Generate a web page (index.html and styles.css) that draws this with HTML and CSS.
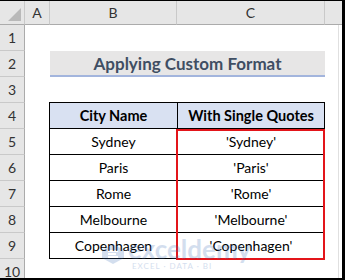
FILE: index.html
```html
<!DOCTYPE html>
<html>
<head>
<meta charset="utf-8">
<link rel="stylesheet" href="styles.css">
</head>
<body>
<div class="frame">
  <div class="sheet">
    <div class="corner"><span class="tri"></span></div>
    <div class="colhead">A</div>
    <div class="colhead">B</div>
    <div class="colhead">C</div>
    <div class="colhead last"></div>

    <div class="rowhead r1">1</div>
    <div class="rowhead r2">2</div>
    <div class="rowhead r3">3</div>
    <div class="rowhead r4">4</div>
    <div class="rowhead r5">5</div>
    <div class="rowhead r6">6</div>
    <div class="rowhead r7">7</div>
    <div class="rowhead r8">8</div>
    <div class="rowhead r9">9</div>
    <div class="rowhead r10">10</div>

    <div class="title">Applying Custom Format</div>

    <table class="data">
      <tr><th>City Name</th><th>With Single Quotes</th></tr>
      <tr><td>Sydney</td><td>'Sydney'</td></tr>
      <tr><td>Paris</td><td>'Paris'</td></tr>
      <tr><td>Rome</td><td>'Rome'</td></tr>
      <tr><td>Melbourne</td><td>'Melbourne'</td></tr>
      <tr><td>Copenhagen</td><td>'Copenhagen'</td></tr>
    </table>

    <div class="highlight"></div>
    <div class="edge"></div>

    <div class="watermark">
      <svg class="wm-logo" width="26" height="24" viewBox="0 0 26 24">
        <path d="M13 2 L24 8 L24 16 L13 22 L2 16 L2 8 Z" fill="#3a6fb7"/>
        <path d="M8 9 L18 9 M8 12 L16 12 M8 15 L18 15" stroke="#ffffff" stroke-width="2"/>
      </svg>
      <div class="wm-text">
        <span class="wm-big">exceldemy</span>
        <span class="wm-small">EXCEL · DATA · BI</span>
      </div>
    </div>
  </div>
</div>
</body>
</html>
```

FILE: styles.css
```css
html, body {
  margin: 0;
  padding: 0;
  background: #000;
}
.frame {
  width: 345px;
  height: 280px;
  padding-top: 1px;
  box-sizing: border-box;
}
.sheet {
  position: relative;
  width: 342px;
  height: 277px;
  overflow: hidden;
  background: #fff;
  display: grid;
  grid-template-columns: 25px 25px 127px 148px 17px;
  grid-template-rows: 24px repeat(10, 26px);
  font-family: "Lato", "Open Sans", sans-serif;
  color: #000;
}
.corner {
  background: #e6e6e6;
  border-right: 1px solid #c9c9c9;
  border-bottom: 1px solid #ababab;
  position: relative;
}
.tri {
  position: absolute;
  right: 3px;
  bottom: 3px;
  width: 0;
  height: 0;
  border-left: 13px solid transparent;
  border-bottom: 13px solid #b9b9b9;
}
.colhead {
  background: #e6e6e6;
  border-right: 1px solid #c9c9c9;
  border-bottom: 1px solid #ababab;
  display: flex;
  align-items: center;
  justify-content: center;
  font-size: 14px;
  color: #333;
}
.colhead.last { border-right: none; }
.rowhead {
  grid-column: 1;
  background: #e6e6e6;
  border-right: 1px solid #ababab;
  border-bottom: 1px solid #c9c9c9;
  display: flex;
  align-items: center;
  justify-content: center;
  font-size: 14px;
  color: #333;
}
.r1 { grid-row: 2; }
.r2 { grid-row: 3; }
.r3 { grid-row: 4; }
.r4 { grid-row: 5; }
.r5 { grid-row: 6; }
.r6 { grid-row: 7; }
.r7 { grid-row: 8; }
.r8 { grid-row: 9; }
.r9 { grid-row: 10; }
.r10 { grid-row: 11; }

.title {
  grid-column: 3 / 5;
  grid-row: 3;
  background: #e7e6e6;
  border-bottom: 2px solid #a3b5dd;
  display: flex;
  align-items: center;
  justify-content: center;
  font-weight: 700;
  font-size: 17px;
  color: #3f4e63;
}

.data {
  grid-column: 3 / 5;
  grid-row: 5 / 11;
  border-collapse: collapse;
  width: 276px;
  height: 157px;
  table-layout: fixed;
  margin: -1px 0 0 -1px;
}
.data th, .data td {
  border: 1px solid #000;
  padding: 0;
  height: 25px;
  text-align: center;
  font-size: 14px;
}
.data th {
  background: #d9e1f2;
  font-weight: 700;
  font-size: 14.5px;
}
.data th:first-child, .data td:first-child { width: 127px; }

.highlight {
  grid-column: 4;
  grid-row: 6 / 11;
  border: 2px solid #e3151a;
  margin: 0 0 -1px -1px;
  z-index: 2;
}
.edge {
  grid-column: 5;
  grid-row: 2 / 12;
  border-right: 1px solid #e0e0e0;
  margin-right: 3px;
}

.watermark {
  position: absolute;
  left: 100px;
  top: 236px;
  display: flex;
  align-items: center;
  gap: 2px;
  opacity: 0.22;
  z-index: 3;
  pointer-events: none;
}
.wm-text {
  display: flex;
  flex-direction: column;
  align-items: flex-start;
}
.wm-big {
  font-family: "Lato", sans-serif;
  font-size: 26px;
  font-weight: 700;
  line-height: 24px;
  color: #3a6fb7;
}
.wm-small {
  font-family: "Lato", sans-serif;
  font-size: 8px;
  letter-spacing: 1px;
  line-height: 10px;
  color: #3a6fb7;
  margin-left: 4px;
}
```
